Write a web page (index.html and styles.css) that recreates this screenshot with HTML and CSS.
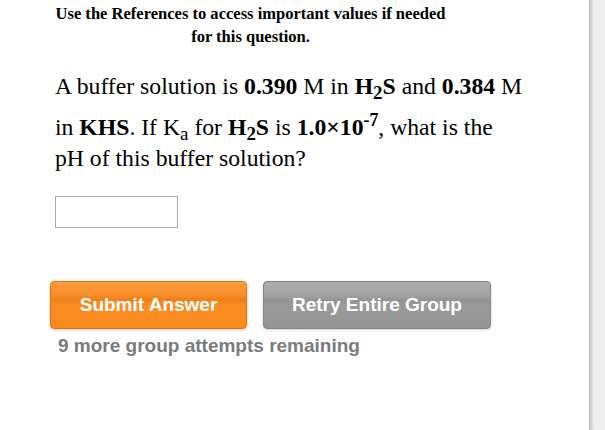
FILE: index.html
```html
<!DOCTYPE html>
<html>
<head>
<meta charset="utf-8">
<link rel="stylesheet" href="styles.css">
</head>
<body>
<div class="page">
  <div class="main">
    <p class="notice">Use the References to access important values if needed for this question.</p>
    <p class="question">A buffer solution is <b>0.390</b> M in <b>H<sub>2</sub>S</b> and <b>0.384</b> M in <b>KHS</b>. If K<sub>a</sub> for <b>H<sub>2</sub>S</b> is <b>1.0×10<sup>-7</sup></b>, what is the pH of this buffer solution?</p>
    <div class="answer"><input class="field" type="text"></div>
    <div class="actions">
      <button class="btn btn-submit">Submit Answer</button>
      <button class="btn btn-retry">Retry Entire Group</button>
    </div>
    <p class="attempts">9 more group attempts remaining</p>
  </div>
  <div class="edge"></div>
</div>
</body>
</html>
```
FILE: styles.css
```css
html, body {
  margin: 0;
  padding: 0;
  background: #ffffff;
}
body {
  font-family: "Liberation Serif", "Times New Roman", serif;
  color: #000;
}
.page {
  display: flex;
  width: 605px;
  height: 430px;
  overflow: hidden;
}
.main {
  flex: 1;
  padding-top: 2px;
}
.edge {
  width: 16px;
  height: 430px;
  background: linear-gradient(to right, #b9b9b9 0px, #d2d2d2 2px, #e6e6e6 4px, #efefef 5px, #efefef 100%);
}
.notice {
  margin: 0 0 0 55px;
  width: 391px;
  text-align: center;
  font-weight: bold;
  font-size: 16.55px;
  line-height: 23px;
}
.question {
  margin: 23.4px 0 0 55px;
  width: 470px;
  font-size: 23.7px;
  line-height: 31px;
}
.question sub {
  font-size: 0.8em;
  line-height: 0;
  vertical-align: -0.25em;
}
.question sup {
  font-size: 0.75em;
  line-height: 37px;
  vertical-align: super;
}
.answer {
  margin: 22px 0 0 55px;
}
.field {
  display: block;
  box-sizing: border-box;
  width: 123px;
  height: 32px;
  margin: 0;
  border: 1px solid #aaaaaa;
  background: #fff;
  padding: 0 4px;
}
.actions {
  display: flex;
  gap: 16px;
  margin: 53px 0 0 50px;
}
.btn {
  box-sizing: border-box;
  height: 48px;
  padding: 0;
  margin: 0;
  border-radius: 4px;
  font-family: "Liberation Sans", Arial, sans-serif;
  font-weight: bold;
  font-size: 19px;
  color: #ffffff;
  box-shadow: 0 1px 3px rgba(0, 0, 0, 0.18);
}
.btn-submit {
  width: 197px;
  border: 1px solid #f26e05;
  background: linear-gradient(to bottom, #fb9a3e 0%, #f98f2a 28%, #ec8119 38%, #fa8c22 50%, #fb8a1e 100%);
}
.btn-retry {
  width: 228px;
  border: 1px solid #858585;
  background: linear-gradient(to bottom, #adadad 0%, #a3a3a3 28%, #939393 40%, #9a9a9a 52%, #959595 100%);
}
.attempts {
  margin: 6px 0 0 58px;
  font-family: "Liberation Sans", Arial, sans-serif;
  font-weight: bold;
  font-size: 19px;
  line-height: 22px;
  color: #7b7b7b;
}
```
